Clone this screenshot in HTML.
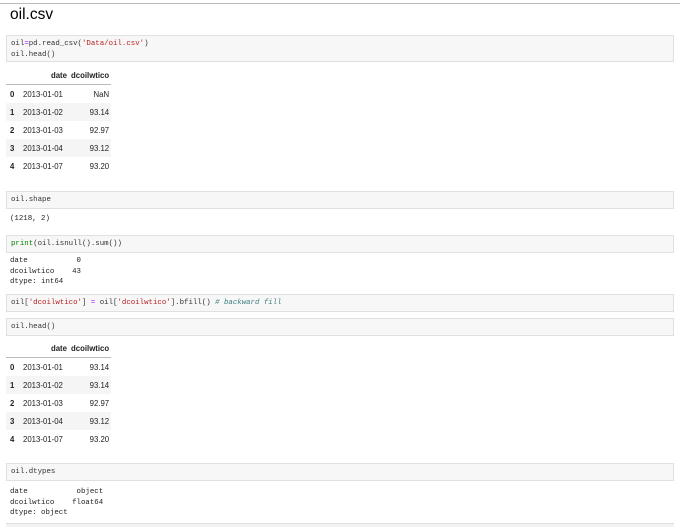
<!DOCTYPE html>
<html><head><style>
body{margin:0;width:680px;height:528px;background:#fff;position:relative;overflow:hidden;font-family:"Liberation Sans",sans-serif;}
.a{position:absolute;}
.top{left:0;top:3px;width:680px;height:1px;background:#bbb;}
h1{position:absolute;left:10px;top:6px;margin:0;font-size:15.5px;font-weight:normal;color:#000;}
.cell{position:absolute;left:6px;width:668px;background:#f7f7f7;border:1px solid #e0e0e0;font-family:"Liberation Mono",monospace;font-size:7.4px;line-height:11px;padding:3px 4px;box-sizing:border-box;color:#333;}
.out{position:absolute;left:10px;font-family:"Liberation Mono",monospace;font-size:7.4px;line-height:10.5px;color:#222;white-space:pre;}
.s{color:#ba2121}.o{color:#aa22ff}.k{color:#008000}.c{color:#408080;font-style:italic}
table{position:absolute;left:6px;border-collapse:collapse;font-size:7.8px;color:#222;}
td,th{height:18px;padding:0 2px;text-align:right;}
th{font-weight:bold;}
thead th{border-bottom:1px solid #bbb;height:17px;}
tbody tr:nth-child(even){background:#f5f5f5;}
td.d{width:44px;text-align:left;padding-left:4px;}
th.i{width:7px;text-align:left;padding-left:4px;}
.bot{left:6px;top:523px;width:668px;height:3px;background:#f2f2f2;border-top:1px solid #e0e0e0;}
</style></head><body>
<div class="a top"></div>
<h1>oil.csv</h1>
<div class="cell" style="top:35px;height:27px;">oil<span class="o">=</span>pd.read_csv(<span class="s">'Data/oil.csv'</span>)<br>oil.head()</div>
<table style="top:67px;">
<thead><tr><th class="i"></th><th style="text-align:right">date</th><th>dcoilwtico</th></tr></thead>
<tbody>
<tr><th class="i">0</th><td class="d">2013-01-01</td><td>NaN</td></tr>
<tr><th class="i">1</th><td class="d">2013-01-02</td><td>93.14</td></tr>
<tr><th class="i">2</th><td class="d">2013-01-03</td><td>92.97</td></tr>
<tr><th class="i">3</th><td class="d">2013-01-04</td><td>93.12</td></tr>
<tr><th class="i">4</th><td class="d">2013-01-07</td><td>93.20</td></tr>
</tbody></table>
<div class="cell" style="top:191px;height:18px;">oil.shape</div>
<div class="out" style="top:214px;">(1218, 2)</div>
<div class="cell" style="top:235px;height:18px;"><span class="k">print</span>(oil.isnull().sum())</div>
<div class="out" style="top:256px;">date           0
dcoilwtico    43
dtype: int64</div>
<div class="cell" style="top:294px;height:18px;">oil[<span class="s">'dcoilwtico'</span>] <span class="o">=</span> oil[<span class="s">'dcoilwtico'</span>].bfill() <span class="c"># backward fill</span></div>
<div class="cell" style="top:318px;height:18px;">oil.head()</div>
<table style="top:340px;">
<thead><tr><th class="i"></th><th style="text-align:right">date</th><th>dcoilwtico</th></tr></thead>
<tbody>
<tr><th class="i">0</th><td class="d">2013-01-01</td><td>93.14</td></tr>
<tr><th class="i">1</th><td class="d">2013-01-02</td><td>93.14</td></tr>
<tr><th class="i">2</th><td class="d">2013-01-03</td><td>92.97</td></tr>
<tr><th class="i">3</th><td class="d">2013-01-04</td><td>93.12</td></tr>
<tr><th class="i">4</th><td class="d">2013-01-07</td><td>93.20</td></tr>
</tbody></table>
<div class="cell" style="top:463px;height:18px;">oil.dtypes</div>
<div class="out" style="top:487px;">date           object
dcoilwtico    float64
dtype: object</div>
<div class="a bot"></div>
</body></html>
